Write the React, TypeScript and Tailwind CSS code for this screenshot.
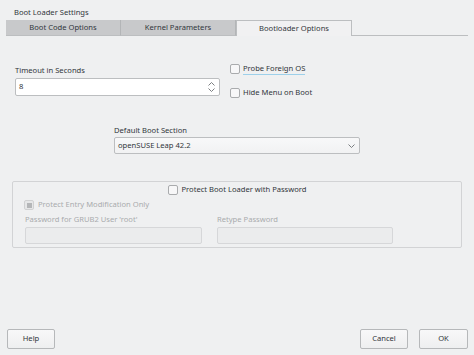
import React from "react";

function Check({ checked = false, disabled = false }: { checked?: boolean; disabled?: boolean }) {
  return (
    <span
      className={`flex items-center justify-center w-[10px] h-[10px] rounded-[2px] border ${
        disabled ? "border-[#d0d1d2] bg-[#e6e7e8]" : "border-[#a9abad] bg-[#f7f7f8]"
      }`}
    >
      {checked && <span className={`w-[5px] h-[5px] ${disabled ? "bg-[#b4b6b8]" : "bg-[#31363b]"}`} />}
    </span>
  );
}

function Chevron({ up = false }: { up?: boolean }) {
  return (
    <svg width="7" height="4" viewBox="0 0 7 4" className="block">
      <path
        d={up ? "M0.5 3.5 L3.5 0.5 L6.5 3.5" : "M0.5 0.5 L3.5 3.5 L6.5 0.5"}
        fill="none"
        stroke="#6e7275"
        strokeWidth="0.9"
      />
    </svg>
  );
}

function Button({ label, w }: { label: string; w: string }) {
  return (
    <div
      className={`${w} h-[20px] flex items-center justify-center rounded-[2px] border border-[#b6b8ba] bg-gradient-to-b from-[#f8f8f9] to-[#eeeff0]`}
    >
      {label}
    </div>
  );
}

export default function App() {
  const tabs = ["Boot Code Options", "Kernel Parameters"];

  return (
    <div className="w-[474px] h-[355px] bg-[#eff0f1] flex flex-col text-[7.6px] text-[#31363b] font-['Noto_Sans',sans-serif] overflow-hidden">
      <div className="h-[20px] pt-[6px] pl-[14px] leading-[12px]">Boot Loader Settings</div>

      {/* tab bar */}
      <div className="flex h-[16px] mx-[6px] leading-[15px]">
        {tabs.map((t) => (
          <div
            key={t}
            className="w-[115px] first:w-[115px] bg-[#c8c9cb] border-r border-[#b3b5b7] border-b border-b-[#bcbec0] text-center"
          >
            {t}
          </div>
        ))}
        <div className="w-[116px] border-t border-l border-r border-[#bcbec0] bg-[#f1f1f2] text-center">
          Bootloader Options
        </div>
        <div className="flex-1 border-b border-[#bcbec0]" />
      </div>

      {/* timeout + checkboxes */}
      <div className="flex mt-[27px] pl-[15px] gap-[10px]">
        <div className="w-[205px] flex flex-col">
          <div className="mt-[1px] leading-[12px]">Timeout in Seconds</div>
          <div className="mt-[2px] h-[18px] flex items-center justify-between pl-[3px] pr-[4px] bg-white border border-[#bcbec0] rounded-[2px]">
            <span>8</span>
            <span className="flex flex-col gap-[2px]">
              <Chevron up />
              <Chevron />
            </span>
          </div>
        </div>
        <div className="flex flex-col">
          <div className="h-[12px] flex items-center gap-[3px]">
            <Check />
            <span className="leading-[11px] border-b border-[#9dd0ea]">Probe Foreign OS</span>
          </div>
          <div className="mt-[12px] h-[12px] flex items-center gap-[3px]">
            <Check />
            <span>Hide Menu on Boot</span>
          </div>
        </div>
      </div>

      {/* default boot section */}
      <div className="mt-[25px] mx-auto w-[246px] flex flex-col">
        <div className="leading-[12px]">Default Boot Section</div>
        <div className="mt-[1px] h-[17px] flex items-center justify-between pl-[3px] pr-[4px] rounded-[2px] border border-[#bcbec0] bg-gradient-to-b from-[#f8f8f9] to-[#f1f2f3]">
          <span>openSUSE Leap 42.2</span>
          <Chevron />
        </div>
      </div>

      {/* password group */}
      <div className="mt-[27px] ml-[12px] w-[450px] h-[67px] border border-[#d2d3d5] rounded-[2px] px-[12px] pt-[2px] flex flex-col">
        <div className="h-[12px] flex items-center justify-center gap-[4px]">
          <Check />
          <span>Protect Boot Loader with Password</span>
        </div>
        <div className="mt-[3px] h-[12px] flex items-center gap-[4px] text-[#a9abad] -ml-[1px]">
          <Check checked disabled />
          <span>Protect Entry Modification Only</span>
        </div>
        <div className="mt-[2px] flex gap-[15px] text-[#a9abad]">
          <div className="w-[177px] flex flex-col">
            <div className="leading-[12px]">Password for GRUB2 User 'root'</div>
            <div className="mt-[2px] h-[17px] rounded-[2px] border border-[#d6d7d9] bg-[#ebeced]" />
          </div>
          <div className="w-[176px] flex flex-col">
            <div className="leading-[12px]">Retype Password</div>
            <div className="mt-[2px] h-[17px] rounded-[2px] border border-[#d6d7d9] bg-[#ebeced]" />
          </div>
        </div>
      </div>

      {/* buttons */}
      <div className="mt-auto mb-[6px] flex items-center px-[6px] pl-[7px]">
        <Button label="Help" w="w-[48px]" />
        <div className="flex-1" />
        <Button label="Cancel" w="w-[48px]" />
        <div className="w-[11px]" />
        <Button label="OK" w="w-[49px]" />
      </div>
    </div>
  );
}
